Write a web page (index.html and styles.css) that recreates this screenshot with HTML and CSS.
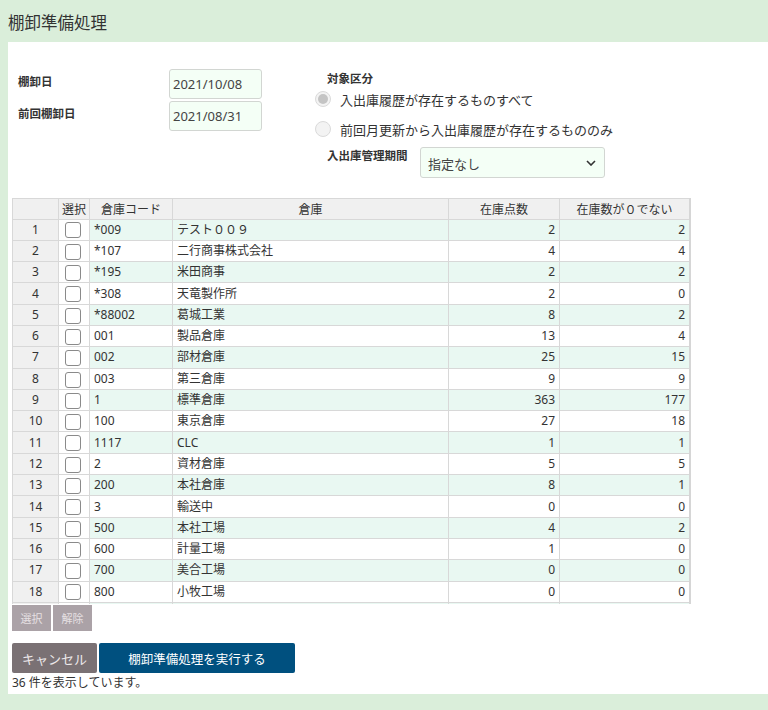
FILE: index.html
```html
<!DOCTYPE html>
<html lang="ja">
<head>
<meta charset="utf-8">
<title>棚卸準備処理</title>
<link rel="stylesheet" href="styles.css">
</head>
<body>
<h1 class="title">棚卸準備処理</h1>
<div class="panel">
  <div class="form">
    <div class="dates">
      <label class="lbl">棚卸日</label>
      <input class="inp" type="text" value="2021/10/08">
      <label class="lbl">前回棚卸日</label>
      <input class="inp" type="text" value="2021/08/31">
    </div>
    <div class="target">
      <div class="lbl lbl-indent">対象区分</div>
      <div class="radio-row"><span class="radio checked"></span><span>入出庫履歴が存在するものすべて</span></div>
      <div class="radio-row"><span class="radio"></span><span>前回月更新から入出庫履歴が存在するもののみ</span></div>
      <div class="period">
        <div class="lbl">入出庫管理期間</div>
        <div class="select">
          <span>指定なし</span>
          <svg class="chev" width="10" height="6" viewBox="0 0 10 6"><path d="M1 1 L5 5 L9 1" fill="none" stroke="#333" stroke-width="1.6"/></svg>
        </div>
      </div>
    </div>
  </div>

  <div class="grid-wrap">
    <table class="grid">
      <colgroup>
        <col class="c-no"><col class="c-sel"><col class="c-code"><col class="c-name"><col class="c-cnt"><col class="c-nz">
      </colgroup>
      <thead>
        <tr><th></th><th>選択</th><th>倉庫コード</th><th>倉庫</th><th>在庫点数</th><th>在庫数が０でない</th></tr>
      </thead>
      <tbody>
        <tr class="odd"><td class="no">1</td><td class="sel"><span class="cb"></span></td><td>*009</td><td>テスト００９</td><td class="num">2</td><td class="num">2</td></tr>
        <tr><td class="no">2</td><td class="sel"><span class="cb"></span></td><td>*107</td><td>二行商事株式会社</td><td class="num">4</td><td class="num">4</td></tr>
        <tr class="odd"><td class="no">3</td><td class="sel"><span class="cb"></span></td><td>*195</td><td>米田商事</td><td class="num">2</td><td class="num">2</td></tr>
        <tr><td class="no">4</td><td class="sel"><span class="cb"></span></td><td>*308</td><td>天竜製作所</td><td class="num">2</td><td class="num">0</td></tr>
        <tr class="odd"><td class="no">5</td><td class="sel"><span class="cb"></span></td><td>*88002</td><td>葛城工業</td><td class="num">8</td><td class="num">2</td></tr>
        <tr><td class="no">6</td><td class="sel"><span class="cb"></span></td><td>001</td><td>製品倉庫</td><td class="num">13</td><td class="num">4</td></tr>
        <tr class="odd"><td class="no">7</td><td class="sel"><span class="cb"></span></td><td>002</td><td>部材倉庫</td><td class="num">25</td><td class="num">15</td></tr>
        <tr><td class="no">8</td><td class="sel"><span class="cb"></span></td><td>003</td><td>第三倉庫</td><td class="num">9</td><td class="num">9</td></tr>
        <tr class="odd"><td class="no">9</td><td class="sel"><span class="cb"></span></td><td>1</td><td>標準倉庫</td><td class="num">363</td><td class="num">177</td></tr>
        <tr><td class="no">10</td><td class="sel"><span class="cb"></span></td><td>100</td><td>東京倉庫</td><td class="num">27</td><td class="num">18</td></tr>
        <tr class="odd"><td class="no">11</td><td class="sel"><span class="cb"></span></td><td>1117</td><td>CLC</td><td class="num">1</td><td class="num">1</td></tr>
        <tr><td class="no">12</td><td class="sel"><span class="cb"></span></td><td>2</td><td>資材倉庫</td><td class="num">5</td><td class="num">5</td></tr>
        <tr class="odd"><td class="no">13</td><td class="sel"><span class="cb"></span></td><td>200</td><td>本社倉庫</td><td class="num">8</td><td class="num">1</td></tr>
        <tr><td class="no">14</td><td class="sel"><span class="cb"></span></td><td>3</td><td>輸送中</td><td class="num">0</td><td class="num">0</td></tr>
        <tr class="odd"><td class="no">15</td><td class="sel"><span class="cb"></span></td><td>500</td><td>本社工場</td><td class="num">4</td><td class="num">2</td></tr>
        <tr><td class="no">16</td><td class="sel"><span class="cb"></span></td><td>600</td><td>計量工場</td><td class="num">1</td><td class="num">0</td></tr>
        <tr class="odd"><td class="no">17</td><td class="sel"><span class="cb"></span></td><td>700</td><td>美合工場</td><td class="num">0</td><td class="num">0</td></tr>
        <tr><td class="no">18</td><td class="sel"><span class="cb"></span></td><td>800</td><td>小牧工場</td><td class="num">0</td><td class="num">0</td></tr>
        <tr class="odd"><td class="no"></td><td class="sel"></td><td></td><td></td><td class="num"></td><td class="num"></td></tr>
      </tbody>
    </table>
  </div>

  <div class="small-btns">
    <button class="sbtn">選択</button>
    <button class="sbtn">解除</button>
  </div>

  <div class="actions">
    <button class="btn cancel">キャンセル</button>
    <button class="btn exec">棚卸準備処理を実行する</button>
  </div>
  <div class="count">36 件を表示しています。</div>
</div>
</body>
</html>
```

FILE: styles.css
```css
html, body {
  margin: 0;
  padding: 0;
}
body {
  background: #daeeda;
  font-family: "Noto Sans", "Noto Sans CJK JP", sans-serif;
  color: #333;
  height: 710px;
  overflow: hidden;
}
.title {
  margin: 0;
  height: 42px;
  line-height: 46px;
  padding-left: 8px;
  font-size: 16.5px;
  font-weight: normal;
  color: #333;
}
.panel {
  margin-left: 8px;
  background: #fff;
  height: 652px;
  padding-left: 4px;
  box-sizing: border-box;
}
.form {
  display: flex;
  padding-top: 27px;
  padding-left: 6px;
}
.dates {
  display: grid;
  grid-template-columns: 151px 93px;
  grid-auto-rows: 30px;
  row-gap: 2px;
  align-items: start;
  width: 297px;
}
.lbl {
  font-size: 11.5px;
  font-weight: bold;
  line-height: 16px;
  color: #333;
}
.dates .lbl {
  padding-top: 5px;
}
.inp {
  width: 93px;
  height: 30px;
  box-sizing: border-box;
  border: 1px solid #d2d6d2;
  border-radius: 3px;
  background: #f4fff6;
  font-family: "Noto Sans", "Noto Sans CJK JP", sans-serif;
  font-size: 13px;
  color: #444;
  padding: 0 3px;
  margin: 0;
}
.target {
  display: flex;
  flex-direction: column;
}
.lbl-indent {
  margin-left: 12px;
  padding-top: 2px;
}
.radio-row {
  display: flex;
  align-items: center;
  gap: 9px;
  font-size: 13px;
  height: 20px;
  margin-top: 2px;
}
.radio-row + .radio-row {
  margin-top: 10px;
}
.radio {
  width: 14px;
  height: 14px;
  border-radius: 50%;
  border: 1px solid #dadada;
  background: #f3f3f3;
  position: relative;
  flex: none;
}
.radio.checked::after {
  content: "";
  position: absolute;
  left: 2px;
  top: 2px;
  width: 10px;
  height: 10px;
  border-radius: 50%;
  background: #c4c4c4;
}
.period {
  display: flex;
  align-items: flex-start;
  margin-left: 12px;
  margin-top: 8px;
}
.period .lbl {
  width: 93px;
  padding-top: 1px;
}
.select {
  width: 185px;
  height: 31px;
  box-sizing: border-box;
  border: 1px solid #d2d6d2;
  border-radius: 3px;
  background: #f4fff6;
  display: flex;
  align-items: center;
  justify-content: space-between;
  padding: 2px 8px 0 7px;
  font-size: 13px;
  color: #444;
}
.chev {
  margin-top: -2px;
}
.grid-wrap {
  margin-top: 20px;
  width: 679px;
  height: 406px;
  overflow: hidden;
  box-sizing: border-box;
  border-right: 2px solid #d6d6d6;
}
.grid {
  border-collapse: collapse;
  table-layout: fixed;
  width: 677px;
  font-size: 12px;
  color: #333;
}
.c-no { width: 46px; }
.c-sel { width: 31px; }
.c-code { width: 83px; }
.c-name { width: 276px; }
.c-cnt { width: 111px; }
.c-nz { width: 130px; }
.grid th, .grid td {
  border: 1px solid #d8d8d8;
  white-space: nowrap;
  overflow: hidden;
}
.grid th {
  background: #f0f0f0;
  font-weight: normal;
  height: 19.5px;
  padding: 0 3px;
  text-align: center;
  font-size: 12px;
}
.grid td {
  height: 20.3px;
  padding: 0 4px;
  line-height: 18px;
}
.grid tr.odd td {
  background: #e9f8f2;
}
.grid td.no, .grid tr.odd td.no {
  background: #f0f0f0;
  text-align: center;
  padding: 0;
}
.grid td.sel, .grid tr.odd td.sel {
  background: #fff;
  padding: 0;
  text-align: center;
}
.grid td.num {
  text-align: right;
  padding-right: 4px;
}
.cb {
  display: inline-block;
  width: 14px;
  height: 14px;
  border: 1px solid #8a8a8a;
  border-radius: 3px;
  background: #fff;
  vertical-align: middle;
  margin-right: 2px;
}
.small-btns {
  display: flex;
  gap: 2px;
  margin-top: 1px;
}
.sbtn {
  width: 39px;
  height: 26px;
  border: none;
  background: #aba2a7;
  color: #e6e0e3;
  font-family: "Noto Sans", "Noto Sans CJK JP", sans-serif;
  font-size: 11px;
  padding: 0;
}
.actions {
  display: flex;
  gap: 2px;
  margin-top: 12px;
}
.btn {
  height: 30px;
  border: none;
  border-radius: 2px;
  color: #fff;
  font-family: "Noto Sans", "Noto Sans CJK JP", sans-serif;
  padding: 0;
}
.cancel {
  width: 85px;
  background: #7a7174;
  font-size: 13px;
  color: #ece8ea;
}
.exec {
  width: 196px;
  background: #00507f;
  font-size: 12.5px;
}
.count {
  font-size: 12px;
  line-height: 16px;
  margin-top: 2px;
  color: #333;
}
```
